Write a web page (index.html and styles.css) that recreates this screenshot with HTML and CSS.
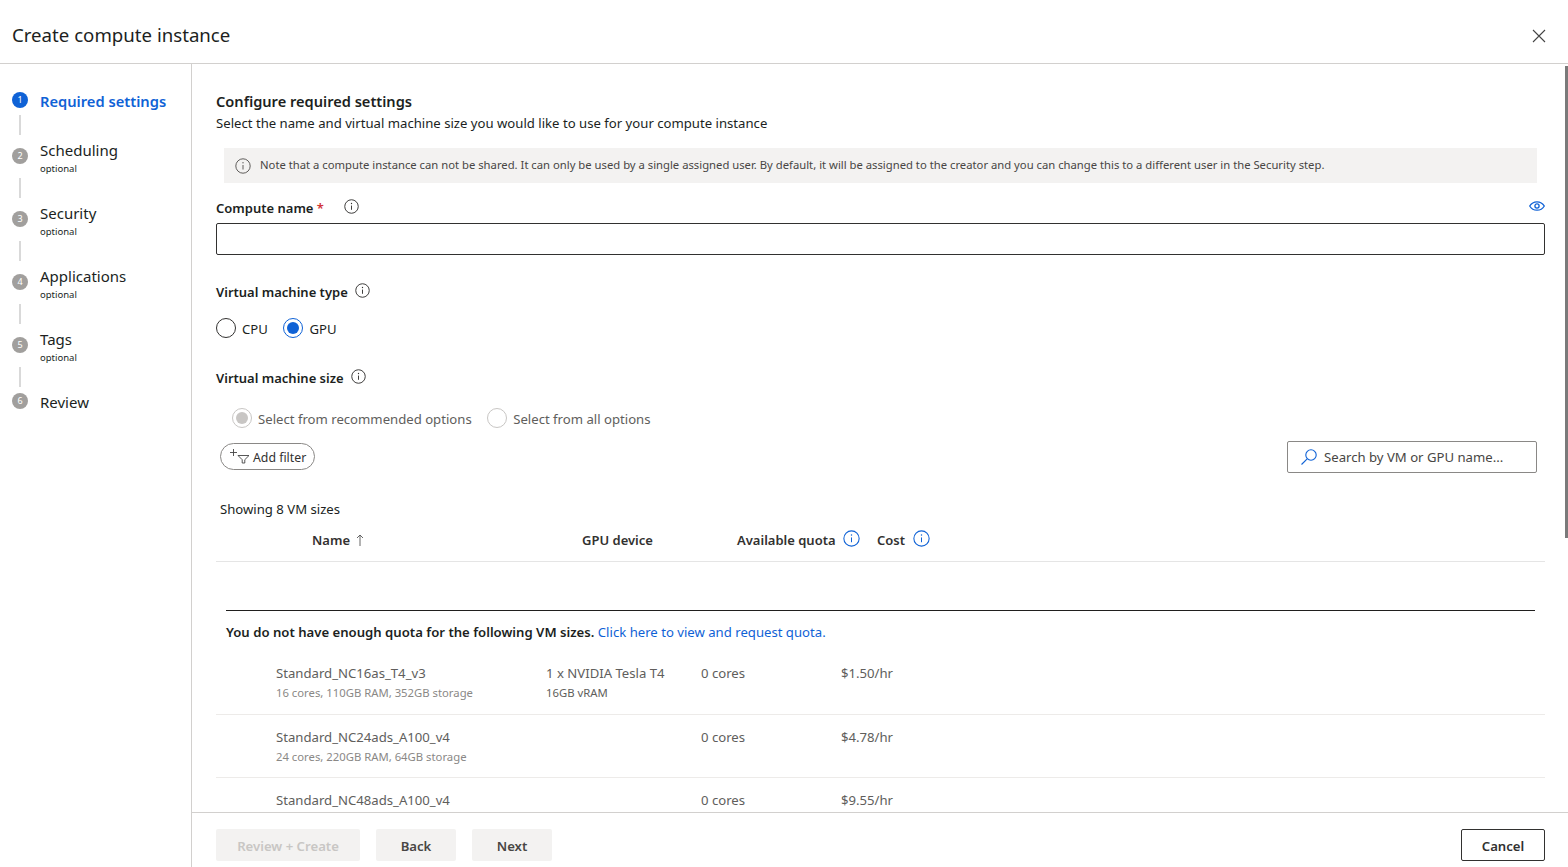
FILE: index.html
```html
<!DOCTYPE html>
<html lang="en">
<head>
    <meta charset="UTF-8">
    <title>Create compute instance</title>
    <link rel="stylesheet" href="styles.css">
</head>
<body>
    <svg width="0" height="0" class="defs">
        <symbol id="info" viewBox="0 0 16 16">
            <circle cx="8" cy="8" r="7.2" fill="none" stroke="currentColor" stroke-width="1"/>
            <path d="M8 7v4.5" stroke="currentColor" stroke-width="1" fill="none"/>
            <circle cx="8" cy="4.8" r="0.7" fill="currentColor"/>
        </symbol>
    </svg>
    <header class="header">
        <h1>Create compute instance</h1>
        <svg class="close" width="14" height="14" viewBox="0 0 14 14"><path d="M1 1l12 12M13 1L1 13" stroke="#444" stroke-width="1.1" fill="none"/></svg>
    </header>
    <div class="body">
        <nav class="steps">
            <div class="step active"><span class="num">1</span><div class="step-text"><div class="step-name">Required settings</div></div></div>
            <div class="step-line"></div>
            <div class="step"><span class="num">2</span><div class="step-text"><div class="step-name">Scheduling</div><div class="step-sub">optional</div></div></div>
            <div class="step-line"></div>
            <div class="step"><span class="num">3</span><div class="step-text"><div class="step-name">Security</div><div class="step-sub">optional</div></div></div>
            <div class="step-line"></div>
            <div class="step"><span class="num">4</span><div class="step-text"><div class="step-name">Applications</div><div class="step-sub">optional</div></div></div>
            <div class="step-line"></div>
            <div class="step"><span class="num">5</span><div class="step-text"><div class="step-name">Tags</div><div class="step-sub">optional</div></div></div>
            <div class="step-line"></div>
            <div class="step last"><span class="num">6</span><div class="step-text"><div class="step-name">Review</div></div></div>
        </nav>
        <div class="panel">
            <main class="content">
                <h2>Configure required settings</h2>
                <p class="intro">Select the name and virtual machine size you would like to use for your compute instance</p>
                <div class="notice">
                    <svg class="icon" width="16" height="16"><use href="#info"/></svg>
                    <span>Note that a compute instance can not be shared. It can only be used by a single assigned user. By default, it will be assigned to the creator and you can change this to a different user in the Security step.</span>
                </div>
                <div class="name-label">
                    <label>Compute name <span class="req">*</span></label>
                    <svg class="icon name-info" width="15" height="15"><use href="#info"/></svg>
                    <svg class="eye" width="16" height="10" viewBox="0 0 16 10">
                        <path d="M0.7 5C2.5 2 5 0.8 8 0.8S13.5 2 15.3 5C13.5 8 11 9.2 8 9.2S2.5 8 0.7 5Z" fill="none" stroke="#0f62d6" stroke-width="1.3"/>
                        <circle cx="8" cy="5" r="2.1" fill="none" stroke="#0f62d6" stroke-width="1.3"/>
                    </svg>
                </div>
                <div class="textbox"></div>
                <div class="label-row type-label">
                    <label>Virtual machine type</label>
                    <svg class="icon" width="15" height="15"><use href="#info"/></svg>
                </div>
                <div class="radios type-radios">
                    <span class="radio"></span><span class="radio-text">CPU</span>
                    <span class="radio checked"></span><span class="radio-text">GPU</span>
                </div>
                <div class="label-row size-label">
                    <label>Virtual machine size</label>
                    <svg class="icon" width="15" height="15"><use href="#info"/></svg>
                </div>
                <div class="radios size-radios">
                    <span class="radio off checked-off"></span><span class="radio-text muted">Select from recommended options</span>
                    <span class="radio off"></span><span class="radio-text muted">Select from all options</span>
                </div>
                <div class="toolbar">
                    <button class="filter">
                        <svg width="21" height="16" viewBox="0 0 21 16">
                            <path d="M4.5 1v7M1 4.5h7" stroke="#444" stroke-width="0.9" fill="none"/>
                            <path d="M9 7.5h11l-4.2 4.2v3.3h-2.6v-3.3z" stroke="#444" stroke-width="0.9" fill="none"/>
                        </svg>
                        <span class="filter-text">Add filter</span>
                    </button>
                    <div class="search">
                        <svg width="18" height="18" viewBox="0 0 18 18">
                            <circle cx="11" cy="7" r="5.2" fill="none" stroke="#0f62d6" stroke-width="1.1"/>
                            <path d="M7.2 10.8L1.5 16.5" stroke="#0f62d6" stroke-width="1.1" fill="none"/>
                        </svg>
                        <span>Search by VM or GPU name...</span>
                    </div>
                </div>
                <div class="showing">Showing 8 VM sizes</div>
                <div class="table-head">
                    <div class="th th-name">Name
                        <svg width="8" height="12" viewBox="0 0 8 12"><path d="M4 12V1M1 4l3-3 3 3" stroke="#555" stroke-width="0.9" fill="none"/></svg>
                    </div>
                    <div class="th th-gpu">GPU device</div>
                    <div class="th th-quota">Available quota
                        <svg class="blue-info" width="17" height="17"><use href="#info"/></svg>
                    </div>
                    <div class="th th-cost">Cost
                        <svg class="blue-info" width="17" height="17"><use href="#info"/></svg>
                    </div>
                </div>
                <div class="quota-msg">
                    <b>You do not have enough quota for the following VM sizes.</b> <a href="#">Click here to view and request quota.</a>
                </div>
                <div class="vm-row">
                    <div><div class="vm-name">Standard_NC16as_T4_v3</div><div class="vm-sub">16 cores, 110GB RAM, 352GB storage</div></div>
                    <div><div class="vm-name">1 x NVIDIA Tesla T4</div><div class="vm-sub dark">16GB vRAM</div></div>
                    <div class="vm-name">0 cores</div>
                    <div class="vm-name">$1.50/hr</div>
                </div>
                <div class="vm-row">
                    <div><div class="vm-name">Standard_NC24ads_A100_v4</div><div class="vm-sub">24 cores, 220GB RAM, 64GB storage</div></div>
                    <div></div>
                    <div class="vm-name">0 cores</div>
                    <div class="vm-name">$4.78/hr</div>
                </div>
                <div class="vm-row">
                    <div class="vm-name">Standard_NC48ads_A100_v4</div>
                    <div></div>
                    <div class="vm-name">0 cores</div>
                    <div class="vm-name">$9.55/hr</div>
                </div>
            </main>
            <div class="scrollbar"></div>
            <footer class="footer">
                <button class="btn disabled wide">Review + Create</button>
                <button class="btn">Back</button>
                <button class="btn">Next</button>
                <button class="btn cancel">Cancel</button>
            </footer>
        </div>
    </div>
</body>
</html>
```

FILE: styles.css
```css
* {
    box-sizing: border-box;
}
html, body {
    height: 100%;
}
body {
    margin: 0;
    display: flex;
    flex-direction: column;
    height: 867px;
    overflow: hidden;
    background-color: #fff;
    color: #201f1e;
    font-family: "Noto Sans", "Open Sans", sans-serif;
    font-size: 13.15px;
}
.defs {
    position: absolute;
}
.header {
    height: 64px;
    flex-shrink: 0;
    display: flex;
    align-items: center;
    justify-content: space-between;
    padding: 6px 22px 0 12px;
    border-bottom: 1px solid #d2d0ce;
}
.header h1 {
    margin: 0;
    font-size: 18.65px;
    font-weight: 400;
}
.close {
    margin-top: 2px;
}
.body {
    flex: 1;
    display: flex;
    min-height: 0;
}
.steps {
    width: 192px;
    flex-shrink: 0;
    padding: 28px 0 0 12px;
    border-right: 1px solid #d2d0ce;
}
.step {
    display: flex;
    height: 38px;
    align-items: flex-start;
}
.step.active, .step.last {
    height: 20px;
}
.step .num {
    width: 16px;
    height: 16px;
    margin-top: 8px;
    margin-right: 12px;
    border-radius: 50%;
    background-color: #a19f9d;
    color: #fff;
    font-size: 9px;
    line-height: 16px;
    text-align: center;
    flex-shrink: 0;
}
.step.active .num {
    margin-top: 0;
    background-color: #0f62d6;
}
.step.last .num {
    margin-top: 1px;
}
.active .step-text {
    margin-top: -1px;
}
.step-name {
    font-size: 15px;
    line-height: 20px;
}
.active .step-name {
    color: #0f62d6;
    font-size: 14.7px;
    font-weight: 600;
}
.step-sub {
    font-size: 9.5px;
    line-height: 15px;
    margin-top: 1px;
}
.step-line {
    width: 2px;
    height: 20px;
    margin: 0 0 5px 7px;
    background-color: #d9d9d9;
}
.active + .step-line {
    margin-top: 3px;
}
.panel {
    flex: 1;
    min-width: 0;
    display: flex;
    flex-direction: column;
    position: relative;
}
.content {
    flex: 1;
    min-height: 0;
    overflow: hidden;
    padding: 27px 23px 0 24px;
}
.scrollbar {
    position: absolute;
    top: 2px;
    right: 0;
    width: 3px;
    height: 472px;
    background-color: #7a7a7a;
}
h2 {
    margin: 0;
    font-size: 14.6px;
    line-height: 20px;
    font-weight: 600;
}
.intro {
    margin: 2px 0 0;
    line-height: 20px;
}
.notice {
    display: flex;
    align-items: center;
    height: 35px;
    margin: 15px 8px 0;
    padding: 0 0 2px 11px;
    gap: 9px;
    background-color: #f3f2f1;
    color: #484644;
    font-size: 11.27px;
}
.icon {
    color: #323130;
    flex-shrink: 0;
}
.notice .icon {
    color: #605e5c;
    margin-top: 2px;
}
label {
    font-weight: 600;
    font-size: 13px;
    line-height: 20px;
}
.req {
    color: #d13438;
}
.name-label {
    display: flex;
    align-items: center;
    height: 20px;
    margin-top: 15px;
}
.name-info {
    margin: -3px 0 0 20px;
}
.eye {
    margin: -5px 0 0 auto;
}
.textbox {
    height: 32px;
    margin-top: 5px;
    border: 1px solid #323130;
    border-radius: 2px;
}
.label-row {
    display: flex;
    align-items: center;
    gap: 7px;
    height: 20px;
}
.label-row .icon {
    margin-top: -3px;
}
.type-label {
    margin-top: 27px;
}
.radios {
    display: flex;
    align-items: center;
}
.type-radios {
    margin-top: 15px;
    height: 22px;
}
.radio {
    width: 20px;
    height: 20px;
    border: 1px solid #323130;
    border-radius: 50%;
    flex-shrink: 0;
    position: relative;
}
.radio-text {
    margin: 2px 15.5px 0 6px;
}
.radio.checked {
    border-color: #0f62d6;
}
.radio.checked::after, .radio.checked-off::after {
    content: "";
    position: absolute;
    inset: 3px;
    border-radius: 50%;
    background-color: #0f62d6;
}
.radio.off {
    border-color: #c8c6c4;
}
.radio.checked-off::after {
    background-color: #c8c6c4;
}
.radio-text.muted {
    color: #605e5c;
}
.size-label {
    margin-top: 29px;
}
.size-radios {
    margin: 19px 0 0 16px;
    height: 22px;
}
.toolbar {
    display: flex;
    justify-content: space-between;
    align-items: center;
    height: 32px;
    margin: 12px 8px 0 4px;
}
.filter {
    display: flex;
    align-items: center;
    gap: 3px;
    height: 27px;
    margin-top: -2px;
    padding: 0 8px;
    background-color: #fff;
    border: 1px solid #8a8886;
    border-radius: 14px;
    color: #323130;
    font-family: inherit;
    font-size: 12.3px;
}
.filter-text {
    margin-top: 2px;
}
.search {
    display: flex;
    align-items: center;
    gap: 6px;
    width: 250px;
    height: 32px;
    padding-left: 12px;
    border: 1px solid #8a8886;
    border-radius: 2px;
    color: #484644;
}
.showing {
    margin: 26px 0 0 4px;
    line-height: 20px;
}
.table-head {
    height: 43px;
    border-bottom: 1px solid #e5e5e5;
    display: grid;
    grid-template-columns: 270px 155px 140px 1fr;
    align-items: start;
    padding: 11px 0 0 96px;
}
.th {
    display: flex;
    align-items: center;
    gap: 6px;
    height: 20px;
    font-weight: 600;
    font-size: 13px;
    color: #323130;
    white-space: nowrap;
}
.th-quota {
    gap: 7px;
}
.th-cost {
    gap: 8px;
}
.blue-info {
    color: #0f62d6;
    margin-top: -3px;
}
.quota-msg {
    margin: 48px 10px 0;
    padding-top: 11px;
    border-top: 1px solid #201f1e;
    line-height: 20px;
}
.quota-msg b {
    font-weight: 600;
}
.quota-msg a {
    color: #0f62d6;
    text-decoration: none;
}
.vm-row {
    display: grid;
    grid-template-columns: 270px 155px 140px 1fr;
    height: 63px;
    padding: 12px 0 0 60px;
    border-bottom: 1px solid #edebe9;
}
.quota-msg + .vm-row {
    height: 64px;
    margin-top: 9px;
}
.vm-name {
    line-height: 20px;
    color: #605e5c;
    white-space: nowrap;
}
.vm-sub {
    margin-top: 1px;
    font-size: 11.3px;
    line-height: 18px;
    color: #8a8886;
    white-space: nowrap;
}
.vm-sub.dark {
    color: #605e5c;
}
.footer {
    height: 55px;
    flex-shrink: 0;
    display: flex;
    gap: 16px;
    padding: 16px 23px 0 24px;
    border-top: 1px solid #d2d0ce;
    background-color: #fff;
}
.btn {
    width: 80px;
    height: 32px;
    padding-top: 2px;
    background-color: #f3f2f1;
    border: none;
    border-radius: 2px;
    color: #484644;
    font-family: inherit;
    font-size: 13.15px;
    font-weight: 600;
}
.btn.wide {
    width: 144px;
}
.btn.disabled {
    color: #c8c6c4;
}
.btn.cancel {
    width: 84px;
    margin-left: auto;
    background-color: #fff;
    border: 1px solid #323130;
    color: #323130;
}
```
